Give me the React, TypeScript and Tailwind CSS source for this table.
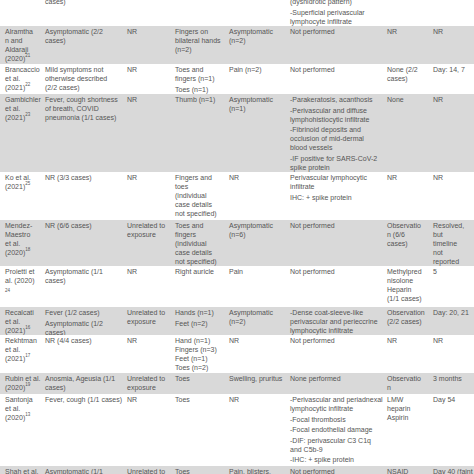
import React from "react";

type Line = React.ReactNode;
type Para = Line[];
type Cell = Para[];

const W = ["w-[40px]", "w-[82px]", "w-[48px]", "w-[54px]", "w-[61px]", "w-[97px]", "w-[46px]", "w-[46px]"];

function Sup({ n }: { n: string }) {
  return <sup className="text-[4.5px] relative top-[-1px] align-super leading-none">{n}</sup>;
}

function Ref({ year, n }: { year: string; n: string }) {
  return (
    <>
      {year}
      <Sup n={n} />
    </>
  );
}

type RowDef = { h: string; grey: boolean; cells: Cell[]; shift?: boolean };

const rows: RowDef[] = [
  {
    h: "h-[26px]",
    grey: false,
    shift: true,
    cells: [
      [],
      [["cases)"]],
      [],
      [],
      [],
      [["(dyshidrotic pattern)"], ["-Superficial perivascular", "lymphocyte infiltrate"]],
      [],
      [],
    ],
  },
  {
    h: "h-[38px]",
    grey: true,
    cells: [
      [["Alramtha", "n and", "Aldaraji", <Ref year="(2020)" n="21" />]],
      [["Asymptomatic (2/2", "cases)"]],
      [["NR"]],
      [["Fingers on", "bilateral hands", "(n=2)"]],
      [["Asymptomatic", "(n=2)"]],
      [["Not performed"]],
      [["NR"]],
      [["NR"]],
    ],
  },
  {
    h: "h-[30px]",
    grey: false,
    cells: [
      [["Brancaccio", "et al.", <Ref year="(2021)" n="22" />]],
      [["Mild symptoms not", "otherwise described", "(2/2 cases)"]],
      [["NR"]],
      [["Toes and", "fingers (n=1)"], ["Toes (n=1)"]],
      [["Pain (n=2)"]],
      [["Not performed"]],
      [["None (2/2", "cases)"]],
      [["Day: 14, 7"]],
    ],
  },
  {
    h: "h-[78px]",
    grey: true,
    cells: [
      [["Gambichler", "et al.", <Ref year="(2021)" n="23" />]],
      [["Fever, cough shortness", "of breath, COVID", "pneumonia (1/1 cases)"]],
      [["NR"]],
      [["Thumb (n=1)"]],
      [["Asymptomatic", "(n=1)"]],
      [
        ["-Parakeratosis, acanthosis"],
        ["-Perivascular and diffuse", "lymphohistiocytic infiltrate"],
        ["-Fibrinoid deposits and", "occlusion of mid-dermal", "blood vessels"],
        ["-IF positive for SARS-CoV-2", "spike protein"],
      ],
      [["None"]],
      [["NR"]],
    ],
  },
  {
    h: "h-[48px]",
    grey: false,
    cells: [
      [["Ko et al.", <Ref year="(2021)" n="25" />]],
      [["NR (3/3 cases)"]],
      [["NR"]],
      [["Fingers and", "toes", "(individual", "case details", "not specified)"]],
      [["NR"]],
      [["Perivascular lymphocytic", "infiltrate"], ["IHC: + spike protein"]],
      [["NR"]],
      [["NR"]],
    ],
  },
  {
    h: "h-[46px]",
    grey: true,
    cells: [
      [["Mendez-", "Maestro", "et al.", <Ref year="(2020)" n="18" />]],
      [["NR (6/6 cases)"]],
      [["Unrelated to", "exposure"]],
      [["Toes and", "fingers", "(individual", "case details", "not specified)"]],
      [["Asymptomatic", "(n=6)"]],
      [["Not performed"]],
      [["Observatio", "n (6/6", "cases)"]],
      [["Resolved,", "but", "timeline", "not", "reported"]],
    ],
  },
  {
    h: "h-[41px]",
    grey: false,
    cells: [
      [["Proietti et", "al. (2020)", <span className="text-[4.5px] leading-none">24</span>]],
      [["Asymptomatic (1/1", "cases)"]],
      [["NR"]],
      [["Right auricle"]],
      [["Pain"]],
      [["Not performed"]],
      [["Methylpred", "nisolone", "Heparin", "(1/1 cases)"]],
      [["5"]],
    ],
  },
  {
    h: "h-[28px]",
    grey: true,
    cells: [
      [["Recalcati", "et al.", <Ref year="(2021)" n="16" />]],
      [["Fever (1/2 cases)"], ["Asymptomatic (1/2", "cases)"]],
      [["Unrelated to", "exposure"]],
      [["Hands (n=1)"], ["Feet (n=2)"]],
      [["Asymptomatic", "(n=2)"]],
      [["-Dense coat-sleeve-like", "perivascular and perieccrine", "lymphocytic infiltrate"]],
      [["Observation", "(2/2 cases)"]],
      [["Day: 20, 21"]],
    ],
  },
  {
    h: "h-[38px]",
    grey: false,
    cells: [
      [["Rekhtman", "et al.", <Ref year="(2021)" n="17" />]],
      [["NR (4/4 cases)"]],
      [["NR"]],
      [["Hand (n=1)", "Fingers (n=3)", "Feet (n=1)", "Toes (n=2)"]],
      [["NR"]],
      [["Not performed"]],
      [["NR"]],
      [["NR"]],
    ],
  },
  {
    h: "h-[21px]",
    grey: true,
    cells: [
      [["Rubin et al.", <Ref year="(2020)" n="19" />]],
      [["Anosmia, Ageusia (1/1", "cases)"]],
      [["Unrelated to", "exposure"]],
      [["Toes"]],
      [["Swelling, pruritus"]],
      [["None performed"]],
      [["Observatio", "n"]],
      [["3 months"]],
    ],
  },
  {
    h: "h-[72px]",
    grey: false,
    cells: [
      [["Santonja", "et al.", <Ref year="(2020)" n="13" />]],
      [["Fever, cough (1/1 cases)"]],
      [["NR"]],
      [["Toes"]],
      [["NR"]],
      [
        ["-Perivascular and periadnexal", "lymphocytic infiltrate"],
        ["-Focal thrombosis"],
        ["-Focal endothelial damage"],
        ["-DIF: perivascular C3 C1q", "and C5b-9"],
        ["-IHC: + spike protein"],
      ],
      [["LMW", "heparin", "Aspirin"]],
      [["Day 54"]],
    ],
  },
  {
    h: "h-[30px]",
    grey: true,
    cells: [
      [["Shah et al."]],
      [["Asymptomatic (1/1"]],
      [["Unrelated to"]],
      [["Toes"]],
      [["Pain, blisters,"]],
      [["Not performed"]],
      [["NSAID"]],
      [["Day 40 (faint"]],
    ],
  },
];

export default function App() {
  return (
    <div
      className="w-[474px] h-[474px] overflow-hidden bg-white text-[#555555] text-[7px] leading-[9px]"
      style={{ fontFamily: '"Liberation Sans", Arial, sans-serif' }}
    >
      {rows.map((r, ri) => (
        <div key={ri} className={`flex shrink-0 overflow-hidden ${r.h} ${r.grey ? "bg-[#d9d9d9]" : "bg-white"}`}>
          {r.cells.map((c, ci) => (
            <div key={ci} className={`${W[ci]} shrink-0 pl-[5px] pt-[1px]`}>
              <div className={r.shift ? "mt-[-4px]" : ""}>
                {c.map((p, pi) => (
                  <div key={pi} className={pi > 0 ? "mt-[1.5px]" : ""}>
                    {p.map((l, li) => (
                      <div key={li} className="whitespace-nowrap">
                        {l}
                      </div>
                    ))}
                  </div>
                ))}
              </div>
            </div>
          ))}
        </div>
      ))}
    </div>
  );
}
